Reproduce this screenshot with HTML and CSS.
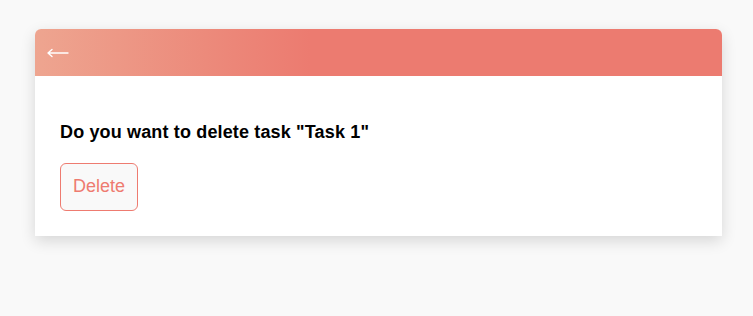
FILE: index.html
```html
<!DOCTYPE html>
<html>
<head>
<meta charset="utf-8">
<link rel="stylesheet" href="styles.css">
</head>
<body>
<div class="page">
  <div class="card">
    <div class="card-header">
      <svg class="back" width="22" height="10" viewBox="0 0 22 10" aria-label="back">
        <path d="M1 5 H21 M1 5 L5 1.5 M1 5 L5 8.5" stroke="#fff" stroke-width="1.4" fill="none" stroke-linecap="round"/>
      </svg>
    </div>
    <div class="card-body">
      <h3 class="question">Do you want to delete task "Task 1"</h3>
      <button class="btn-delete">Delete</button>
    </div>
  </div>
</div>
</body>
</html>
```
FILE: styles.css
```css
html, body {
  margin: 0;
  padding: 0;
  background: #f9f9f9;
  min-height: 316px;
}
.page {
  padding: 29px 31px 0 35px;
}
.card {
  background: #fff;
  border-radius: 6px 6px 0 0;
  box-shadow: 0 5px 15px rgba(0,0,0,0.14);
}
.card-header {
  height: 47px;
  border-radius: 6px 6px 0 0;
  background: linear-gradient(90deg, #eea590 0%, #ec8a7b 25%, #ec7b70 40%, #ec7b70 100%);
  display: flex;
  align-items: center;
  padding-left: 12px;
}
.back {
  display: block;
}
.card-body {
  padding: 46px 25px 25px;
}
.question {
  margin: 0 0 20px;
  font-family: "Liberation Sans", Arial, sans-serif;
  font-weight: bold;
  font-size: 18px;
  letter-spacing: 0.15px;
  line-height: 21px;
  color: #000;
}
.btn-delete {
  display: block;
  width: 78px;
  height: 48px;
  border: 1px solid #ee7b70;
  border-radius: 6px;
  background: #f9f9f9;
  color: #ee7b70;
  font-family: "Liberation Sans", Arial, sans-serif;
  font-size: 18px;
  padding: 0 0 1px;
}
```
